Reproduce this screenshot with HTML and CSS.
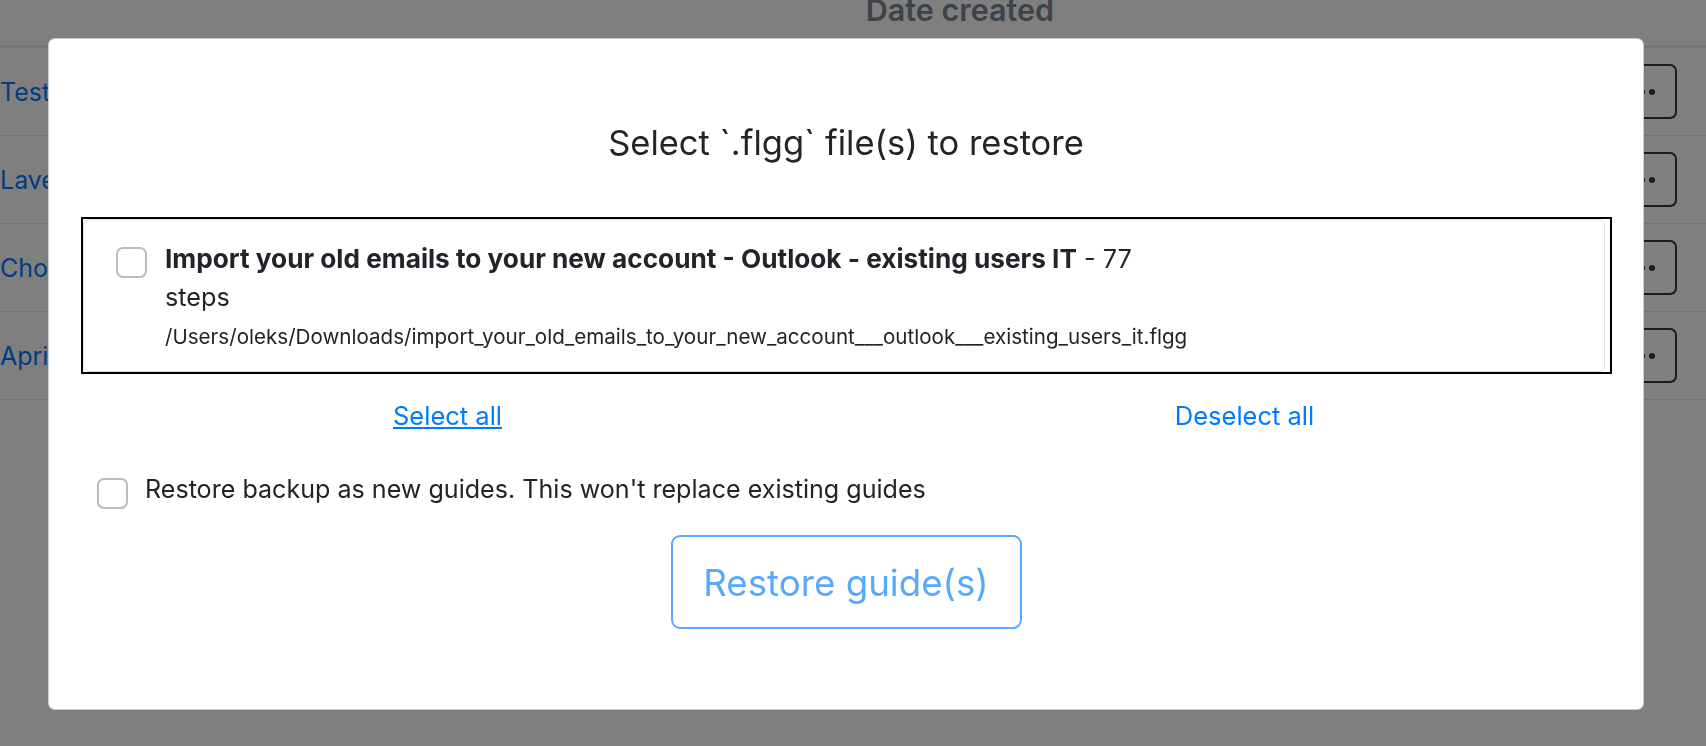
FILE: index.html
```html
<!DOCTYPE html>
<html lang="en">
<head>
<meta charset="utf-8">
<title>Restore guides</title>
<link rel="stylesheet" href="styles.css">
</head>
<body>
<div class="page">
  <div class="table">
    <div class="thead">
      <div class="th th-name"></div>
      <div class="th th-date">Date created</div>
      <div class="th th-actions"></div>
    </div>
    <div class="tr">
      <a class="guide-link" href="#">Test guide</a>
      <button class="dots-btn" type="button"><svg width="26" height="6" viewBox="0 0 26 6"><circle cx="3" cy="3" r="3"/><circle cx="13" cy="3" r="3"/><circle cx="23" cy="3" r="3"/></svg></button>
    </div>
    <div class="tr">
      <a class="guide-link" href="#">Lavender</a>
      <button class="dots-btn" type="button"><svg width="26" height="6" viewBox="0 0 26 6"><circle cx="3" cy="3" r="3"/><circle cx="13" cy="3" r="3"/><circle cx="23" cy="3" r="3"/></svg></button>
    </div>
    <div class="tr">
      <a class="guide-link" href="#">Chocolate</a>
      <button class="dots-btn" type="button"><svg width="26" height="6" viewBox="0 0 26 6"><circle cx="3" cy="3" r="3"/><circle cx="13" cy="3" r="3"/><circle cx="23" cy="3" r="3"/></svg></button>
    </div>
    <div class="tr">
      <a class="guide-link" href="#">April</a>
      <button class="dots-btn" type="button"><svg width="26" height="6" viewBox="0 0 26 6"><circle cx="3" cy="3" r="3"/><circle cx="13" cy="3" r="3"/><circle cx="23" cy="3" r="3"/></svg></button>
    </div>
  </div>
</div>

<div class="backdrop"></div>

<div class="modal-wrap">
  <div class="modal">
    <h5 class="modal-title">Select `.flgg` file(s) to restore</h5>

    <div class="file-list">
      <div class="file-card">
        <span class="checkbox card-check"></span>
        <div class="file-info">
          <div class="file-name"><strong>Import your old emails to your new account - Outlook - existing users IT</strong> - 77 steps</div>
          <div class="file-path">/Users/oleks/Downloads/import_your_old_emails_to_your_new_account___outlook___existing_users_it.flgg</div>
        </div>
      </div>
    </div>

    <div class="select-row">
      <div class="select-col"><a class="link underline" href="#">Select all</a></div>
      <div class="select-col"><a class="link" href="#">Deselect all</a></div>
    </div>

    <label class="option-row">
      <span class="checkbox option-check"></span>
      <span class="option-text">Restore backup as new guides. This won't replace existing guides</span>
    </label>

    <div class="actions">
      <button class="restore-btn" type="button" disabled>Restore guide(s)</button>
    </div>
  </div>
</div>
</body>
</html>
```

FILE: styles.css
```css
* { box-sizing: border-box; }

html, body {
  margin: 0;
  padding: 0;
  height: 100%;
  overflow: hidden;
}

body {
  font-family: Inter, "Noto Sans", "Liberation Sans", sans-serif;
  color: #212529;
  background: #ffffff;
}

/* ---------- background page ---------- */
.page {
  width: 1706px;
}

.table {
  display: flex;
  flex-direction: column;
}

.thead {
  height: 48px;
  display: flex;
  border-bottom: 3px solid #ebebeb;
}

.th {
  display: flex;
  align-items: flex-end;
}

.th-name { width: 800px; }

.th-date {
  width: 320px;
  justify-content: center;
  font-size: 30.5px;
  font-weight: 600;
  color: #7a8690;
  line-height: 1;
  padding-bottom: 20px;
}

.th-actions { flex: 1; }

.tr {
  height: 88px;
  display: flex;
  align-items: center;
  justify-content: space-between;
  border-bottom: 1px solid #dee2e6;
  padding-right: 29px;
}

.guide-link {
  font-size: 25px;
  color: #007bff;
  text-decoration: none;
}

.dots-btn {
  width: 90px;
  height: 55px;
  border: 2px solid #343a40;
  border-radius: 7px;
  background: transparent;
  display: flex;
  align-items: center;
  justify-content: flex-end;
  padding: 0 20px 0 0;
}

.dots-btn svg { fill: #343a40; display: block; }

/* ---------- overlay ---------- */
.backdrop {
  position: fixed;
  inset: 0;
  background: rgba(0, 0, 0, 0.5);
}

.modal-wrap {
  position: fixed;
  inset: 0;
  padding: 38px 0 0 48px;
}

.modal {
  width: 1596px;
  height: 672px;
  background: #fff;
  border: 1px solid rgba(0, 0, 0, 0.2);
  border-radius: 7px;
  display: flex;
  flex-direction: column;
}

.modal-title {
  margin: 83px 0 0;
  text-align: center;
  font-size: 34.5px;
  font-weight: 400;
  line-height: 42px;
  color: #212529;
}

/* ---------- file list ---------- */
.file-list {
  margin: 53px 31px 0 32px;
  border: 2px solid #000;
  padding: 0 5px 0 0;
}

.file-card {
  border: 1px solid #dfdfdf;
  border-radius: 6px;
  display: flex;
  align-items: flex-start;
  padding: 20px 20px 16px 32px;
  gap: 18px;
}

.checkbox {
  flex: none;
  width: 31px;
  height: 31px;
  border: 2px solid #b7bcc4;
  border-radius: 7px;
  background: #fff;
  display: block;
}

.card-check { margin-top: 7px; }

.file-info {
  width: 1000px;
}

.file-name {
  font-size: 25.2px;
  line-height: 38px;
}

.file-name strong {
  font-weight: 700;
  font-size: 26.2px;
}

.file-path {
  font-size: 20.6px;
  line-height: 36px;
  padding-top: 3px;
}

/* ---------- select row ---------- */
.select-row {
  display: flex;
  margin-top: 24px;
}

.select-col {
  flex: 1;
  text-align: center;
}

.link {
  font-size: 25.5px;
  line-height: 36px;
  color: #007bff;
  text-decoration: none;
}

.link.underline { text-decoration: underline; }

/* ---------- option ---------- */
.option-row {
  display: flex;
  align-items: flex-start;
  gap: 17px;
  margin: 38px 0 0 48px;
}

.option-check { margin-top: 6px; }

.option-text {
  font-size: 25.1px;
  line-height: 34px;
}

/* ---------- action ---------- */
.actions {
  display: flex;
  justify-content: center;
  margin-top: 26px;
}

.restore-btn {
  width: 351px;
  height: 94px;
  border: 2px solid #007bff;
  border-radius: 9px;
  background: transparent;
  color: #007bff;
  opacity: 0.65;
  font-family: Inter, "Noto Sans", "Liberation Sans", sans-serif;
  font-size: 36.7px;
  padding: 0;
}
```
